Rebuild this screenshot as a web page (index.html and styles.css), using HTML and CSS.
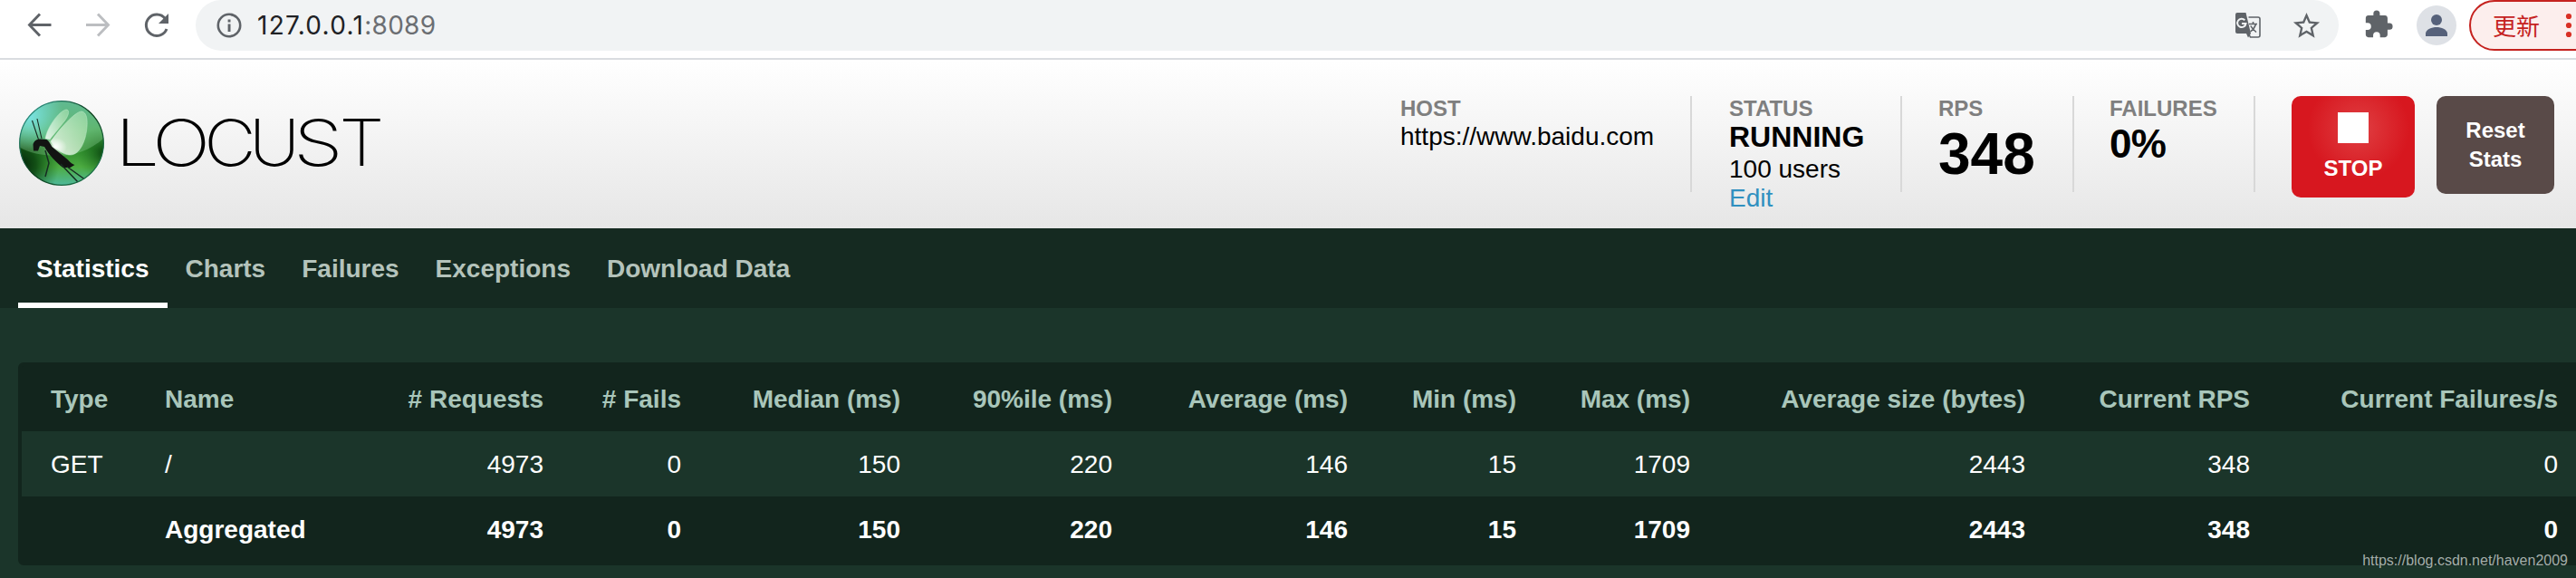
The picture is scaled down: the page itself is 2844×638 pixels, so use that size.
FILE: index.html
```html
<!DOCTYPE html>
<html lang="en">
<head>
<meta charset="utf-8">
<title>Locust</title>
<link rel="stylesheet" href="styles.css">
</head>
<body>
<div class="toolbar">
  <svg class="tool back" viewBox="0 0 32 32"><path d="M28.500 15.500H5M16 3.500 4.500 15.500l11.500 12" fill="none" stroke="#5f6368" stroke-width="2.900"/></svg>
  <svg class="tool forward" viewBox="0 0 32 32"><path d="M3 15.500h24M16 3.500l11.500 12-11.500 12" fill="none" stroke="#bcbec1" stroke-width="2.900"/></svg>
  <svg class="tool reload" viewBox="0 0 32 32"><path d="M25.300 8.500A11.700 11.700 0 1 0 27 20" fill="none" stroke="#5f6368" stroke-width="3"/><path d="M29 3v11H18z" fill="#5f6368"/></svg>
  <div class="address">
    <svg class="info" viewBox="0 0 28 28"><circle cx="14" cy="14" r="12.200" fill="none" stroke="#5f6368" stroke-width="2.600"/><path d="M12.600 7.500h2.900v3h-2.900zM12.600 12.500h2.900v8.500h-2.900z" fill="#5f6368"/></svg>
    <span class="url">127.0.0.1<span class="port">:8089</span></span>
    <svg class="translate" viewBox="0 0 28 28"><path d="M14.500 5H25a2 2 0 0 1 2 2v18a2 2 0 0 1-2 2H16.500L14 22" fill="none" stroke="#5f6368" stroke-width="1.600"/><path d="M2 0h9.500l5.500 23H2a2 2 0 0 1-2-2V2a2 2 0 0 1 2-2zM12 23h5l-3 4.500z" fill="#5f6368"/><path d="M10.300 8.200A4.700 4.700 0 1 0 11.500 12H7" fill="none" stroke="#f1f3f4" stroke-width="2"/><path d="M15 12.500h9M19.500 10v2.500M22.500 12.500c-1 4-3.500 6.500-6 8.300M16.800 14.500c1.500 3 4 5 6.200 7" fill="none" stroke="#5f6368" stroke-width="1.600"/></svg>
    <svg class="star" viewBox="0 0 24 24"><path fill="#5f6368" d="M22 9.240l-7.190-.62L12 2 9.190 8.630 2 9.240l5.460 4.730L5.820 21 12 17.270 18.180 21l-1.630-7.030L22 9.240zM12 15.400l-3.760 2.270 1-4.280-3.320-2.880 4.380-.38L12 6.100l1.710 4.040 4.380.38-3.320 2.880 1 4.280L12 15.400z"/></svg>
  </div>
  <svg class="puzzle" viewBox="0 0 24 24"><path fill="#5f6368" d="M20.500 11H19V7c0-1.100-.9-2-2-2h-4V3.500a2.500 2.500 0 0 0-5 0V5H4c-1.100 0-2 .9-2 2v3.800h1.500a2.700 2.700 0 0 1 0 5.400H2V20c0 1.100.9 2 2 2h3.800v-1.500a2.700 2.700 0 0 1 5.400 0V22H17c1.100 0 2-.9 2-2v-4h1.500a2.500 2.500 0 0 0 0-5z"/></svg>
  <svg class="avatar" viewBox="0 0 44 44"><circle cx="22" cy="22" r="22" fill="#dee1e6"/><circle cx="22" cy="16" r="6" fill="#56617a"/><path d="M10 34v-3c0-4.500 7-7 12-7s12 2.500 12 7v3z" fill="#56617a"/></svg>
  <div class="update"><span class="update-text">更新</span><svg class="dots" viewBox="0 0 8 28"><g fill="#d93025"><circle cx="4" cy="4" r="3.100"/><circle cx="4" cy="14" r="3.100"/><circle cx="4" cy="24" r="3.100"/></g></svg></div>
</div>
<header class="top">
  <svg class="logo" viewBox="0 0 410 94" role="img" aria-label="Locust">
    <defs>
      <linearGradient id="base" x1="0" y1="0" x2="0" y2="1"><stop offset="0" stop-color="#45a883"/><stop offset=".35" stop-color="#45a355"/><stop offset=".57" stop-color="#2f8c2d"/><stop offset=".78" stop-color="#4dac42"/><stop offset="1" stop-color="#4fb99d"/></linearGradient>
      <radialGradient id="sky" cx=".12" cy=".18" r=".4"><stop offset="0" stop-color="#7ce8ee" stop-opacity=".9"/><stop offset="1" stop-color="#7ce8ee" stop-opacity="0"/></radialGradient>
      <radialGradient id="dark" cx=".02" cy=".76" r=".45"><stop offset="0" stop-color="#02200a"/><stop offset=".4" stop-color="#053a0b" stop-opacity=".8"/><stop offset="1" stop-color="#0b5a12" stop-opacity="0"/></radialGradient>
      <radialGradient id="edge" cx="1" cy=".62" r=".32"><stop offset="0" stop-color="#063c0c" stop-opacity=".9"/><stop offset="1" stop-color="#1f7a1f" stop-opacity="0"/></radialGradient>
      <radialGradient id="glow"><stop offset="0" stop-color="#fff"/><stop offset="1" stop-color="#fff" stop-opacity="0"/></radialGradient>
      <linearGradient id="wing" x1="0" y1="1" x2="1" y2="0"><stop offset="0" stop-color="#fff" stop-opacity=".85"/><stop offset="1" stop-color="#b8ecb8" stop-opacity=".5"/></linearGradient>
      <linearGradient id="rim" x1="0" y1="0" x2="1" y2="1"><stop offset="0" stop-color="#39a9a0"/><stop offset=".5" stop-color="#0b3a18"/><stop offset="1" stop-color="#23875d"/></linearGradient>
      <clipPath id="ball"><circle cx="47" cy="47" r="46.500"/></clipPath>
    </defs>
    <g clip-path="url(#ball)">
      <rect width="94" height="94" fill="url(#base)"/>
      <rect width="94" height="94" fill="url(#dark)"/>
      <rect width="94" height="94" fill="url(#edge)"/>
      <path d="M0 0h94v41C78 56 60 60 47 61 27 61 10 58 0 51z" fill="#b5f0c0" opacity=".25"/>
      <rect width="94" height="94" fill="url(#sky)"/>
      <path d="M29 42C31 29 45 11 52 10c5 0 2 8-2 13L34 43z" fill="url(#wing)" stroke="#c4efce" stroke-width=".5"/>
      <path d="M35 45C44 32 62 12 69 12c8 1 7 17 4 29-4 14-11 20-18 19-8-1-16-8-20-15z" fill="url(#wing)" stroke="#c4efce" stroke-width=".5"/>
      <ellipse cx="40" cy="51" rx="13" ry="10" fill="url(#glow)"/>
      <path d="M16 55.500l-.5-7c1-4 4-6 8-6l7 .5c3 2 4 5 6 8l17 14c3 3 4 4.500 8 6l-5 3h-8C42 69 32 59 28 51l-5-1-2 5.500z" fill="#121412"/>
      <path d="M21.500 43 14.500 22M25 42l-5-22" fill="none" stroke="#172c22" stroke-width="1.100"/>
      <path d="M29 55l4 14-4 15M46 70l19 20M53 73l21 15" fill="none" stroke="#172c22" stroke-width="1.500"/>
    </g>
    <circle cx="47" cy="47" r="46.300" fill="none" stroke="url(#rim)" stroke-width="1.200"/>
    <g class="wordmark">
      <text transform="matrix(1.220 0 0 1 106.200 72)">L</text>
      <text transform="matrix(1.194 0 0 1 147.300 72)">O</text>
      <text transform="matrix(1.116 0 0 1 204.200 72)">C</text>
      <text transform="matrix(1.086 0 0 1 254.100 72)">U</text>
      <text transform="matrix(1.237 0 0 1 303.100 72)">S</text>
      <text transform="matrix(1.120 0 0 1 353.500 72)">T</text>
    </g>
  </svg>
  <div class="metrics">
    <div class="metric host"><div class="label">HOST</div><div class="value">https://www.baidu.com</div></div>
    <div class="metric status"><div class="label">STATUS</div><div class="state">RUNNING</div><div class="users">100 users</div><a class="edit">Edit</a></div>
    <div class="metric rps"><div class="label">RPS</div><div class="big">348</div></div>
    <div class="metric failures"><div class="label">FAILURES</div><div class="percent">0%</div></div>
    <div class="metric actions">
      <a class="stop"><span class="stop-icon"></span>STOP</a>
      <a class="reset">Reset<br>Stats</a>
    </div>
  </div>
</header>
<nav class="tabs">
  <a class="tab active">Statistics</a><a class="tab">Charts</a><a class="tab">Failures</a><a class="tab">Exceptions</a><a class="tab">Download Data</a>
</nav>
<main class="content">
  <table class="stats">
    <colgroup><col class="c1"><col class="c2"><col class="c3"><col class="c4"><col class="c5"><col class="c6"><col class="c7"><col class="c8"><col class="c9"><col class="c10"><col class="c11"><col class="c12"></colgroup>
    <thead><tr><th class="left">Type</th><th class="left">Name</th><th># Requests</th><th># Fails</th><th>Median (ms)</th><th>90%ile (ms)</th><th>Average (ms)</th><th>Min (ms)</th><th>Max (ms)</th><th>Average size (bytes)</th><th>Current RPS</th><th>Current Failures/s</th></tr></thead>
    <tbody>
      <tr><td class="left">GET</td><td class="left">/</td><td>4973</td><td>0</td><td>150</td><td>220</td><td>146</td><td>15</td><td>1709</td><td>2443</td><td>348</td><td>0</td></tr>
      <tr class="total"><td></td><td class="left">Aggregated</td><td>4973</td><td>0</td><td>150</td><td>220</td><td>146</td><td>15</td><td>1709</td><td>2443</td><td>348</td><td>0</td></tr>
    </tbody>
  </table>
</main>
<div class="watermark">https://blog.csdn.net/haven2009</div>
</body>
</html>
```
FILE: styles.css
```css
* { box-sizing: border-box; }
html, body { height: 100%; overflow: hidden; }
body {
  margin: 0;
  background: #1b352a;
  color: #fff;
  font: 28px "Liberation Sans", Arial, sans-serif;
  position: relative;
}
svg { display: block; flex: none; }

/* Browser toolbar */
.toolbar {
  display: flex;
  align-items: flex-start;
  height: 66px;
  background: #fff;
  border-bottom: 2px solid #dadce0;
  overflow: hidden;
}
.tool { width: 32px; height: 32px; margin-top: 12px; }
.back { margin-left: 28px; }
.forward { margin-left: 32px; }
.reload { margin-left: 33px; }
.address {
  display: flex;
  align-items: center;
  width: 2366px;
  height: 56px;
  margin-left: 27px;
  padding: 0 18px 0 23px;
  border-radius: 28px;
  background: #f1f3f4;
  flex: none;
}
.info { width: 28px; height: 28px; }
.url {
  margin-left: 17px;
  font: 28px/56px Inter, sans-serif;
  letter-spacing: 1.3px;
  color: #202124;
}
.port { color: #6b6e72; letter-spacing: 0.3px; }
.translate { width: 28px; height: 28px; margin-left: auto; }
.star { width: 35px; height: 35px; margin-left: 33px; }
.puzzle { width: 34px; height: 34px; margin: 10px 0 0 27px; }
.avatar { width: 44px; height: 44px; margin: 6px 0 0 25px; }
.update {
  display: flex;
  align-items: center;
  flex: none;
  width: 150px;
  height: 56px;
  margin-left: 14px;
  padding-left: 24px;
  border: 2px solid #c5221f;
  border-radius: 28px;
  background: #fceeed;
  color: #c5221f;
}
.update-text { font: 26px/52px "Noto Sans CJK SC", sans-serif; }
.dots { width: 8px; height: 28px; margin-left: 28px; }

/* Header */
.top {
  display: flex;
  justify-content: space-between;
  height: 186px;
  padding: 40px 24px 0 21px;
  background: linear-gradient(#fff, #e6e6e6);
}
.logo { width: 410px; height: 94px; margin-top: 5px; }
.wordmark { font: 200 71px Inter, sans-serif; fill: #000; }
.metrics { display: flex; color: #000; }
.metric { height: 106px; }
.metric + .metric { border-left: 2px solid #d8d8d8; padding-left: 40px; }
.host { width: 320px; }
.metrics .status { width: 232px; padding-left: 41px; }
.rps { width: 190px; }
.metrics .failures { width: 200px; padding-left: 39px; }
.label { font-size: 24px; line-height: 28px; font-weight: bold; color: #7f7f7f; }
.value { padding-top: 1px; line-height: 32px; }
.state { font-size: 32px; line-height: 34px; font-weight: bold; }
.users { padding-top: 1px; line-height: 36px; }
.edit { display: block; line-height: 28px; color: #3090c0; }
.big { font-size: 64px; line-height: 72px; font-weight: bold; }
.percent { font-size: 44px; line-height: 50px; font-weight: bold; letter-spacing: -0.8px; }
.actions { display: flex; align-items: flex-start; gap: 24px; }
.stop, .reset {
  display: flex;
  flex-direction: column;
  align-items: center;
  border-radius: 10px;
  color: #fff;
  font-size: 24px;
  line-height: 32px;
  font-weight: bold;
  text-align: center;
}
.stop {
  width: 136px;
  height: 112px;
  padding-top: 18px;
  background: radial-gradient(circle at 74px 36px, #e04044 0, #dc2e33 24px, #d7171f 56px);
}
.stop-icon { width: 34px; height: 34px; margin-bottom: 12px; background: #fff; }
.reset { display: block; width: 130px; height: 108px; padding-top: 22px; background: #594a48; }

/* Tabs */
.tabs { display: flex; height: 88px; padding-left: 20px; background: #152a21; }
.tab {
  padding: 1px 20px 0;
  line-height: 87px;
  font-weight: bold;
  color: #b4c3bb;
}
.active { color: #fff; box-shadow: inset 0 -6px #fff; }

/* Statistics table */
.content { padding: 60px 0 0 20px; }
.stats {
  width: 2836px;
  table-layout: fixed;
  border-collapse: separate;
  border-spacing: 0;
  border: 4px solid #12251d;
  border-radius: 6px;
  background: #12251d;
}
.stats th, .stats td { height: 72px; padding: 2px 0 0; text-align: right; white-space: nowrap; }
.stats th { color: #a9c6ba; }
.stats .left { text-align: left; }
.stats td:first-child, .stats th:first-child { padding-left: 32px; }
.stats td:last-child, .stats th:last-child { padding-right: 28px; }
.stats tbody tr { background: #1b352a; }
.stats tbody .total { background: #12251d; font-weight: bold; }
.c1 { width: 158px; }
.c2 { width: 219px; }
.c3 { width: 199px; }
.c4 { width: 152px; }
.c5 { width: 242px; }
.c6 { width: 234px; }
.c7 { width: 260px; }
.c8 { width: 186px; }
.c9 { width: 192px; }
.c10 { width: 370px; }
.c11 { width: 248px; }
.c12 { width: 368px; }

.watermark {
  position: absolute;
  right: 9px;
  bottom: 8px;
  font-size: 16px;
  line-height: 22px;
  color: #a4aeaa;
}
```
